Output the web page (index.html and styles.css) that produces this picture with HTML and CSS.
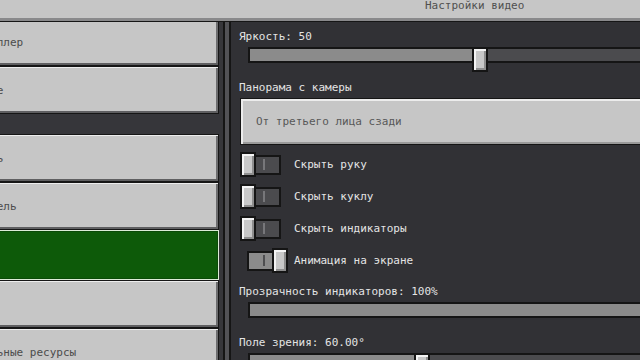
FILE: index.html
```html
<!DOCTYPE html>
<html lang="ru">
<head>
    <meta charset="UTF-8" />
    <meta name="viewport" content="width=device-width, initial-scale=1" />
    <title>Настройки видео</title>
    <link rel="stylesheet" href="styles.css">
</head>
<body>
    <header class="top-bar">
        <h1>Настройки видео</h1>
    </header>

    <div class="main">
        <nav class="side">
            <div class="side-list">
                <button class="side-btn">Контроллер</button>
                <button class="side-btn">Касание</button>
                <h2 class="side-title">Общие</h2>
                <button class="side-btn">Профиль</button>
                <button class="side-btn">Создатель</button>
                <button class="side-btn active">Видео</button>
                <button class="side-btn">Звук</button>
                <button class="side-btn">Глобальные ресурсы</button>
            </div>
        </nav>

        <div class="divider"></div>

        <section class="settings">
            <div class="setting-label">Яркость: 50</div>
            <div class="slider">
                <div class="slider-track"><div class="slider-fill" style="width: 50%"></div></div>
                <div class="slider-thumb" style="left: calc(50% - 8px)"></div>
            </div>

            <div class="setting-label">Панорама с камеры</div>
            <div class="dropdown">От третьего лица сзади</div>

            <div class="toggle-list">
                <div class="toggle-row">
                    <span class="toggle"><span class="toggle-track"><i class="toggle-mark"></i></span><span class="knob"></span></span>
                    <span>Скрыть руку</span>
                </div>
                <div class="toggle-row">
                    <span class="toggle"><span class="toggle-track"><i class="toggle-mark"></i></span><span class="knob"></span></span>
                    <span>Скрыть куклу</span>
                </div>
                <div class="toggle-row">
                    <span class="toggle"><span class="toggle-track"><i class="toggle-mark"></i></span><span class="knob"></span></span>
                    <span>Скрыть индикаторы</span>
                </div>
                <div class="toggle-row">
                    <span class="toggle on"><span class="toggle-track"><i class="toggle-mark"></i></span><span class="knob"></span></span>
                    <span>Анимация на экране</span>
                </div>
            </div>

            <div class="setting-label">Прозрачность индикаторов: 100%</div>
            <div class="slider">
                <div class="slider-track"><div class="slider-fill" style="width: 100%"></div></div>
                <div class="slider-thumb" style="left: calc(100% - 8px)"></div>
            </div>

            <div class="setting-label">Поле зрения: 60.00°</div>
            <div class="slider">
                <div class="slider-track"><div class="slider-fill" style="width: 37.5%"></div></div>
                <div class="slider-thumb" style="left: calc(37.5% - 8px)"></div>
            </div>
        </section>
    </div>
</body>
</html>
```

FILE: styles.css
```css
body {
    margin: 0;
    width: 640px;
    height: 360px;
    overflow: hidden;
    background: #313135;
    font-family: "DejaVu Sans Mono", "Liberation Mono", monospace;
    font-size: 11px;
}

/* Top bar */
.top-bar {
    height: 18px;
    background: #c6c6c6;
    border-bottom: 3px solid #89898b;
}

.top-bar h1 {
    margin: 0;
    padding-left: 425px;
    font-size: 11px;
    font-weight: normal;
    line-height: 11px;
    color: #505050;
}

.main {
    display: flex;
    height: 338px;
    border-top: 1px solid #161616;
    overflow: hidden;
}

/* Left menu */
.side {
    flex: none;
    width: 283px;
    margin-left: -60px;
    padding: 0 4px;
    box-sizing: border-box;
    background: #36363a;
    overflow: hidden;
}

.side-list {
    margin-top: -4px;
}

.side-btn {
    display: flex;
    align-items: center;
    width: 100%;
    height: 48px;
    box-sizing: border-box;
    padding: 0 0 0 12px;
    border: 1px solid #161616;
    background: #c6c6c6;
    box-shadow: inset 0 1px #ededed, inset 0 -2px #5f5f61, inset -2px 0 #6d6d6f;
    font: inherit;
    color: #4c4c4c;
    text-align: left;
    white-space: nowrap;
}

.side-btn.active {
    height: 50px;
    background: #0d5a09;
    border-color: #dcecd8;
    box-shadow: inset 0 0 0 1px #0a4a07;
    color: #ffffff;
}

.side-title {
    height: 20px;
    margin: 0;
    padding-left: 13px;
    font-size: 11px;
    font-weight: normal;
    line-height: 20px;
    color: #e2e2e2;
}

.divider {
    flex: none;
    width: 4px;
    border-left: 2px solid #151515;
    border-right: 2px solid #151515;
    background: #525256;
}

/* Settings panel */
.settings {
    flex: none;
    width: 500px;
    box-sizing: border-box;
    padding: 8px 0 0 8px;
    background: #313135;
    color: #e4e4e4;
}

.setting-label {
    line-height: 13px;
    white-space: nowrap;
}

.slider {
    position: relative;
    width: 464px;
    height: 25px;
    margin: 2px 0 9px 9px;
}

.slider-track {
    display: flex;
    height: 16px;
    margin-top: 4px;
    box-sizing: border-box;
    border: 2px solid #151515;
    background: #4b4b4e;
}

.slider-fill {
    height: 100%;
    background: #8b8b8b;
}

.slider-thumb,
.knob {
    position: absolute;
    top: 0;
    width: 16px;
    height: 25px;
    box-sizing: border-box;
    border: 2px solid #151515;
    background: #c8c8c8;
    box-shadow: inset 2px 2px #f4f4f4, inset -2px -2px #8e8e8e;
}

.dropdown {
    display: flex;
    align-items: center;
    height: 47px;
    margin: 4px 0 7px 1px;
    padding-left: 15px;
    box-sizing: border-box;
    border: 1px solid #151515;
    background: #c6c6c6;
    box-shadow: inset 2px 2px #ececec, inset -2px -2px #9a9a9a;
    color: #585858;
}

/* Toggles */
.toggle-list {
    display: flex;
    flex-direction: column;
    gap: 7px;
    margin-bottom: 12px;
}

.toggle-row {
    display: flex;
    align-items: center;
    gap: 6px;
    height: 25px;
    margin-left: 1px;
}

.toggle {
    position: relative;
    display: flex;
    align-items: center;
    flex: none;
    width: 48px;
    height: 25px;
}

.toggle-track {
    display: flex;
    align-items: center;
    justify-content: center;
    width: 34px;
    height: 20px;
    margin-left: 7px;
    box-sizing: border-box;
    border: 2px solid #151515;
    background: #4b4b4e;
}

.toggle-mark {
    width: 2px;
    height: 11px;
    background: #77777a;
}

.knob {
    left: 0;
}

.toggle.on .toggle-track {
    background: #8b8b8b;
}

.toggle.on .toggle-mark {
    background: #4e4e50;
}

.toggle.on .knob {
    left: auto;
    right: 0;
}
```
